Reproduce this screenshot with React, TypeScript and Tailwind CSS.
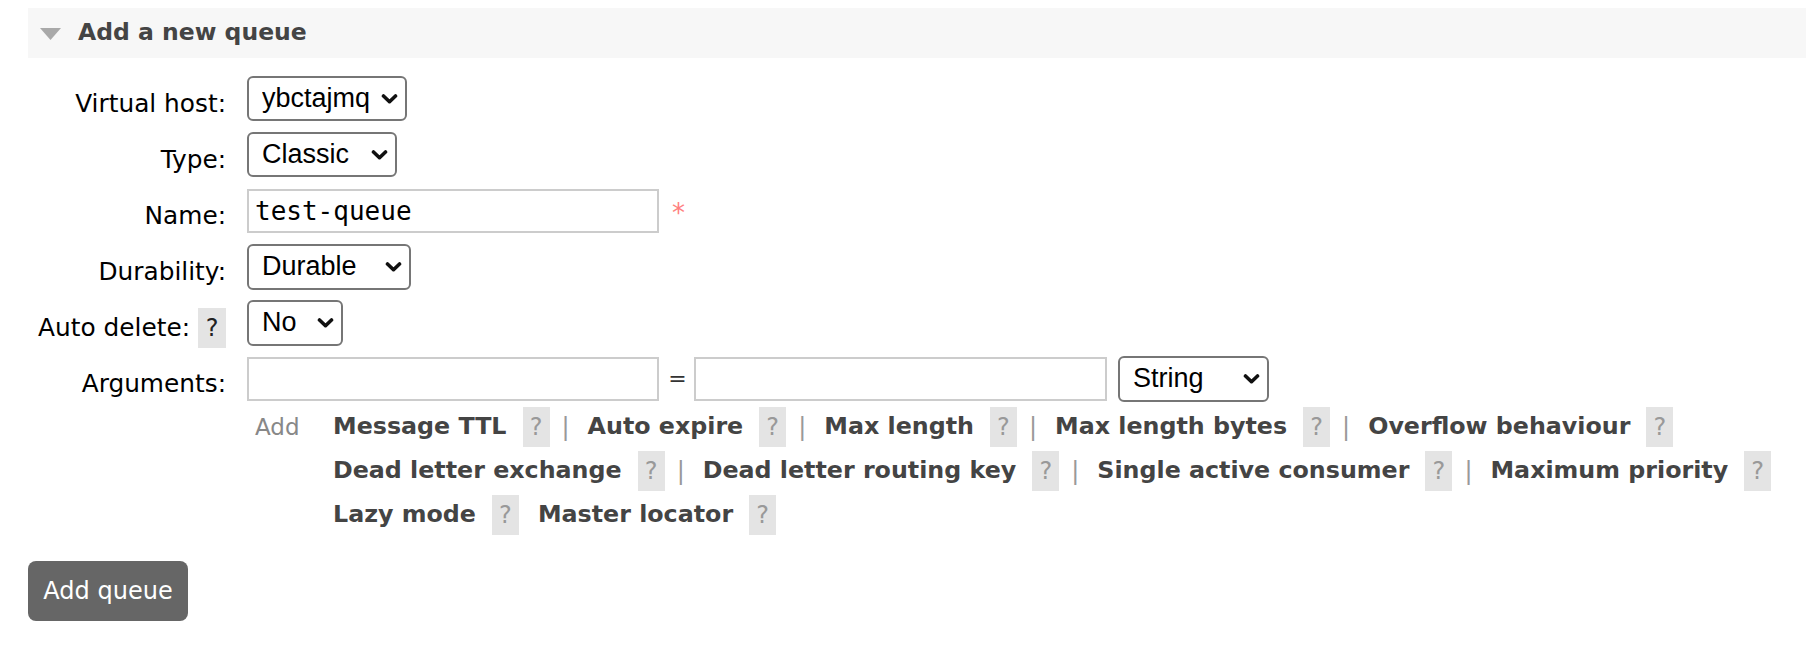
import React from "react";

type SelectProps = { value: string; className: string };

const Chevron = () => (
    <svg
        className="pointer-events-none absolute right-[9px] top-1/2 -translate-y-1/2"
        width="17"
        height="11"
        viewBox="0 0 17 11"
    >
        <path d="M2.5 2.5 L8.5 8.2 L14.5 2.5" fill="none" stroke="#111" strokeWidth="3.6" strokeLinecap="round" strokeLinejoin="round" />
    </svg>
);

const Select = ({ value, className }: SelectProps) => (
    <div className={`relative ${className}`}>
        <select
            defaultValue={value}
            className="h-full w-full appearance-none rounded-[6px] border-2 border-[#767676] bg-white pl-[13px] font-['Liberation_Sans',Arial,sans-serif] text-[27px] text-black outline-none"
        >
            <option>{value}</option>
        </select>
        <Chevron />
    </div>
);

const Row = ({ label, help, children }: { label: string; help?: boolean; children: React.ReactNode }) => (
    <div className="flex h-[45px] items-center">
        <div className="flex w-[198px] items-center justify-end pt-[10px] text-[24.8px] text-black">
            <span>{label}</span>
            {help && (
                <span className="ml-[8px] flex h-[40px] w-[28px] items-center justify-center bg-[#e4e4e4] text-[24px] text-[#222]">
                    ?
                </span>
            )}
        </div>
        <div className="ml-[21px] flex items-center">{children}</div>
    </div>
);

const ARG_LINES = [
    ["Message TTL", "Auto expire", "Max length", "Max length bytes", "Overflow behaviour"],
    ["Dead letter exchange", "Dead letter routing key", "Single active consumer", "Maximum priority"],
    ["Lazy mode", "Master locator"],
];

const App = () => {
    return (
        <div className="min-h-screen bg-white font-['DejaVu_Sans',Verdana,sans-serif] text-black">
            <div className="pl-[28px] pt-[8px]">
                <div className="flex h-[50px] items-center bg-[#f7f7f7]">
                    <svg className="ml-[12px] mt-[2px]" width="21" height="12" viewBox="0 0 21 12">
                        <polygon points="0,0 21,0 10.5,12" fill="#a9a9a9" />
                    </svg>
                    <h2 className="ml-[17px] text-[23.5px] font-bold text-[#444]">Add a new queue</h2>
                </div>

                <div className="mt-[18px] flex flex-col gap-[11px]">
                    <Row label="Virtual host:">
                        <Select value="ybctajmq" className="h-[45px] w-[160px]" />
                    </Row>
                    <Row label="Type:">
                        <Select value="Classic" className="h-[45px] w-[150px]" />
                    </Row>
                    <Row label="Name:">
                        <input
                            defaultValue="test-queue"
                            className="h-[44px] w-[412px] border-2 border-[#cccccc] px-[6px] font-['DejaVu_Sans_Mono',monospace] text-[26px] text-black outline-none"
                        />
                        <span className="ml-[13px] pt-[4px] text-[26px] leading-none text-[#ff8080]">*</span>
                    </Row>
                    <Row label="Durability:">
                        <Select value="Durable" className="h-[46px] w-[164px]" />
                    </Row>
                    <Row label="Auto delete:" help>
                        <Select value="No" className="h-[46px] w-[96px]" />
                    </Row>
                    <Row label="Arguments:">
                        <input className="h-[44px] w-[412px] border-2 border-[#cccccc] px-[6px] text-[24px] outline-none" />
                        <span className="w-[35px] pl-[2px] text-center text-[22px] text-[#333]">=</span>
                        <input className="h-[44px] w-[413px] border-2 border-[#cccccc] px-[6px] text-[24px] outline-none" />
                        <Select value="String" className="ml-[11px] h-[46px] w-[151px]" />
                    </Row>
                </div>

                <div className="mt-[4px] flex">
                    <div className="ml-[219px] flex h-[44px] w-[86px] items-center pl-[8px] text-[23px] text-[#888]">
                        Add
                    </div>
                    <div className="flex flex-col">
                        {ARG_LINES.map((line, li) => (
                            <div key={li} className="flex h-[44px] items-center whitespace-nowrap">
                                {line.map((name, i) => {
                                    const last = i === line.length - 1;
                                    return (
                                        <React.Fragment key={name}>
                                            <span className="text-[23.75px] font-bold text-[#444]">{name}</span>
                                            <span className="ml-[16px] flex h-[40px] w-[27px] items-center justify-center bg-[#e4e4e4] text-[24px] text-[#999]">
                                                ?
                                            </span>
                                            {!last && li < 2 && (
                                                <span className="pl-[12px] pr-[18px] text-[24px] text-[#999]">|</span>
                                            )}
                                            {!last && li === 2 && <span className="w-[19px]" />}
                                        </React.Fragment>
                                    );
                                })}
                            </div>
                        ))}
                    </div>
                </div>

                <button className="mt-[24px] h-[60px] w-[160px] rounded-[8px] bg-[#666] text-[24px] text-white">
                    Add queue
                </button>
            </div>
        </div>
    );
};

export default App;
